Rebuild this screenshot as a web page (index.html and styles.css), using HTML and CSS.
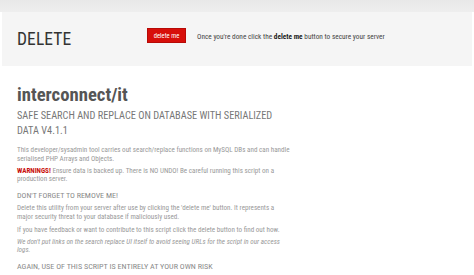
FILE: index.html
```html
<!DOCTYPE html>
<html>
<head>
<meta charset="utf-8">
<link rel="stylesheet" href="styles.css">
</head>
<body>
<div class="topbar"></div>
<header class="header">
  <h1 class="del-title">DELETE</h1>
  <button class="del-btn">delete me</button>
  <p class="del-note">Once you're done click the <strong>delete me</strong> button to secure your server</p>
</header>
<main class="content">
  <h2 class="brand">interconnect/it</h2>
  <h3 class="title">SAFE SEARCH AND REPLACE ON DATABASE WITH SERIALIZED DATA V4.1.1</h3>
  <p class="text p1">This developer/sysadmin tool carries out search/replace functions on MySQL DBs and can handle serialised PHP Arrays and Objects.</p>
  <p class="text p2"><strong class="warn">WARNINGS!</strong> Ensure data is backed up. There is NO UNDO! Be careful running this script on a production server.</p>
  <h4 class="sub">DON'T FORGET TO REMOVE ME!</h4>
  <p class="text p3">Delete this utility from your server after use by clicking the 'delete me' button. It represents a major security threat to your database if maliciously used.</p>
  <p class="text p4">If you have feedback or want to contribute to this script click the delete button to find out how.</p>
  <p class="text p5"><em>We don't put links on the search replace UI itself to avoid seeing URLs for the script in our access logs.</em></p>
  <h4 class="sub again">AGAIN, USE OF THIS SCRIPT IS ENTIRELY AT YOUR OWN RISK</h4>
</main>
</body>
</html>
```
FILE: styles.css
```css
html, body {
  margin: 0;
  padding: 0;
  background: #ffffff;
  font-family: "Roboto Condensed", "Roboto", "Liberation Sans", sans-serif;
}
.topbar {
  height: 12px;
  background: linear-gradient(#e8e8e8, #eeeeee);
}
.header {
  margin: 0 2px;
  height: 54px;
  background: #f5f5f5;
  display: flex;
  align-items: center;
  padding: 0 15px;
}
.del-title {
  margin: 0;
  font-size: 17.5px;
  font-weight: 400;
  letter-spacing: 0.1px;
  color: #333;
  width: 130px;
  flex: none;
}
.del-btn {
  flex: none;
  background: #d70f0a;
  color: #fff;
  border: 1px solid #b70a06;
  font-family: inherit;
  font-size: 6.6px;
  width: 39px;
  height: 15px;
  padding: 0;
  margin: -7px 11px 0 0;
  cursor: pointer;
}
.del-note {
  margin: -6px 0 0 0;
  font-size: 7.3px;
  color: #444;
}
.del-note strong { color: #222; }
.content {
  padding: 17px 17px 0;
  width: 278px;
}
.brand {
  margin: 0;
  font-size: 18.7px;
  font-weight: 700;
  color: #555;
  line-height: 24px;
}
.title {
  margin: 1px 0 0;
  font-size: 10.3px;
  font-weight: 400;
  color: #777;
  line-height: 15px;
}
.text {
  margin: 3px 0 0;
  font-size: 7.1px;
  line-height: 8.8px;
  color: #999;
}
.p1 { margin-top: 8px; }
.p3 { margin-top: 2px; max-width: 270px; }
.p4 { margin-top: 4px; }
.p5 { max-width: 272px; }
.warn { color: #c9100b; font-weight: 700; }
.sub {
  margin: 6px 0 0;
  font-size: 8px;
  font-weight: 400;
  color: #8a8a8a;
  line-height: 12px;
}
.again {
  margin-top: 5px;
  font-size: 8.1px;
  white-space: nowrap;
}
```
